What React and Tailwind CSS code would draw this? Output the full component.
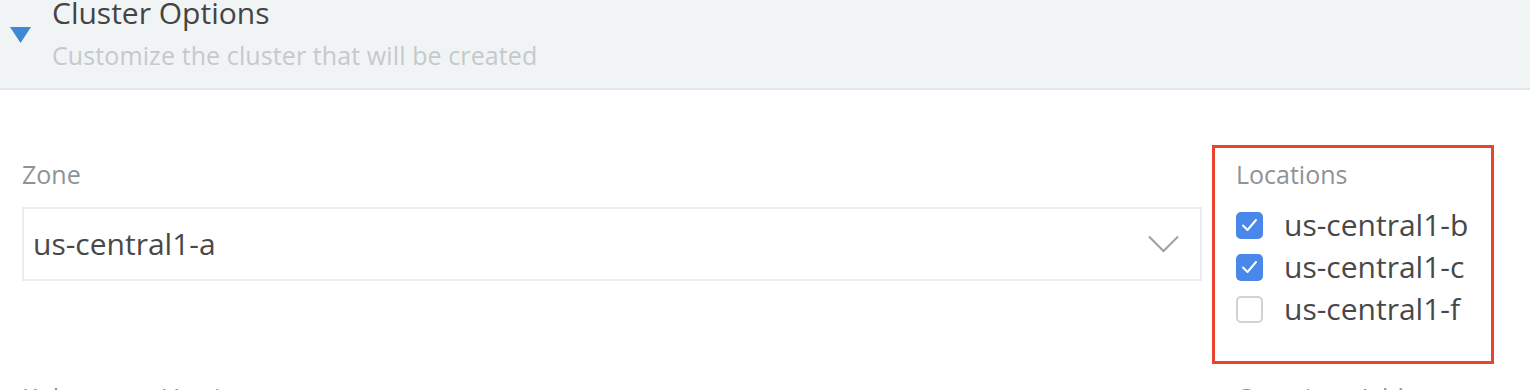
import React from "react";

function Check({ checked }) {
  if (checked) {
    return (
      <div className="w-[27px] h-[27px] rounded-[5px] bg-[#4a87ea] flex items-center justify-center shrink-0">
        <svg width="17" height="14" viewBox="0 0 17 14" fill="none">
          <polyline points="2,7.5 6.5,12 15,2" stroke="#ffffff" strokeWidth="2" strokeLinecap="round" strokeLinejoin="round" />
        </svg>
      </div>
    );
  }
  return <div className="w-[27px] h-[27px] rounded-[5px] border-2 border-[#cfd3d6] bg-white shrink-0" />;
}

export default function App() {
  const locs = [
    { name: "us-central1-b", checked: true },
    { name: "us-central1-c", checked: true },
    { name: "us-central1-f", checked: false },
  ];
  return (
    <div className="w-[1530px] h-[390px] overflow-hidden bg-white font-['Open_Sans',sans-serif]">
      <div className="h-[90px] bg-[#f1f4f5] border-b-2 border-[#e2e6e8] flex items-start">
        <div className="w-[52px] pl-[10px] pt-[27px] shrink-0">
          <svg width="21" height="16" viewBox="0 0 21 16">
            <polygon points="0,0 21,0 10.5,16" fill="#3f88d4" />
          </svg>
        </div>
        <div className="flex flex-col">
          <div className="text-[30px] leading-[26px] text-[#444444]">Cluster Options</div>
          <div className="mt-[17px] text-[25px] leading-[25px] tracking-[0.1px] text-[#c5c9cc]">Customize the cluster that will be created</div>
        </div>
      </div>

      <div className="pl-[22px] pt-[55px] flex gap-[10px] items-start">
        <div className="w-[1180px] pt-[17px] flex flex-col">
          <div className="text-[25px] leading-[25px] text-[#8e9398]">Zone</div>
          <div className="mt-[20px] h-[74px] border-2 border-[#e8edee] flex items-center justify-between pl-[9px] pr-[21px]">
            <span className="text-[30px] leading-[30px] text-[#484848]">us-central1-a</span>
            <svg width="31" height="18" viewBox="0 0 31 18" fill="none">
              <polyline points="1,1.5 15.5,16 30,1.5" stroke="#9aa0a4" strokeWidth="2" />
            </svg>
          </div>
        </div>
        <div className="w-[282px] h-[219px] border-[3px] border-[#e8442e] pl-[21px] pt-[14px] flex flex-col">
          <div className="text-[25px] leading-[25px] text-[#8e9398]">Locations</div>
          <div className="mt-[17px] flex flex-col">
            {locs.map((l) => (
              <div key={l.name} className="h-[42px] flex items-center gap-[21px]">
                <Check checked={l.checked} />
                <span className="text-[30px] leading-[42px] text-[#484848]">{l.name}</span>
              </div>
            ))}
          </div>
        </div>
      </div>

      <div className="pl-[22px] mt-[21px] flex gap-[10px]">
        <div className="w-[1180px] text-[25px] leading-[25px] text-[#8e9398]">Kubernetes Version</div>
        <div className="w-[282px] pl-[24px] text-[25px] leading-[25px] text-[#8e9398]">Container Address Range</div>
      </div>
    </div>
  );
}
